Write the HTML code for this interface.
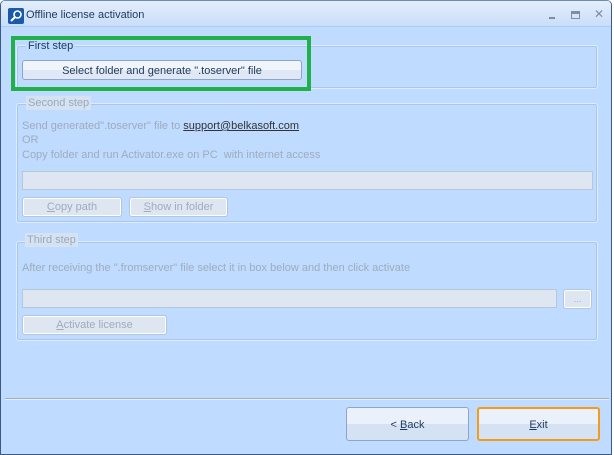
<!DOCTYPE html><html><head><style>
*{margin:0;padding:0;box-sizing:border-box}
body{width:614px;height:455px;background:#fff;font-family:"Liberation Sans",sans-serif;font-size:11px;position:relative;overflow:hidden}
.a{position:absolute}
.win{left:0;top:0;width:612px;height:455px;background:#bfdbff;border:1px solid #3b5a82;border-top-color:#6d8cb4;border-radius:5px 5px 0 0}
.title{left:1px;top:1px;width:610px;height:26px;background:linear-gradient(#e4eefb,#c9defa);border-bottom:1px solid #aecbf0;border-radius:4px 4px 0 0}
.grp{border:1px solid #e0ecfc;border-radius:3px;box-shadow:inset 0 0 0 1px #a9c6ec}
.lg{background:#d5e2f2;color:#9aa8bb;padding:0 2px;height:14px;line-height:14px}
.dis{color:#a0acbc}
.btn{border:1px solid #fff;outline:1px solid #b2c6e0;border-radius:2px;background:#dde6f1;color:#a0acbc;text-align:center;line-height:16px}
.inp{background:#dde6f1;border:1px solid #b8c7d8}
.bb{border:1px solid #8da5c8;border-radius:3px;background:linear-gradient(#eaf1fb 50%,#d4e2f3 50%);color:#1e395b;text-align:center;line-height:34px}
u{text-decoration:underline}
</style></head><body>
<div class="a win"></div>
<div class="a title"></div>
<div class="a" style="left:8px;top:8px;width:16px;height:16px;background:#1a5aa8;border-radius:2px"><svg width="16" height="16"><circle cx="9.5" cy="6.5" r="3.5" fill="none" stroke="#fff" stroke-width="1.6"/><path d="M7 9L3 13" stroke="#fff" stroke-width="2"/></svg></div>
<div class="a" style="left:26px;top:9px;color:#1e395b;font-size:11px">Offline license activation</div>
<div class="a" style="left:549px;top:17px;width:6px;height:2px;background:#7c8ea6"></div>
<div class="a" style="left:571px;top:11px;width:9px;height:8px;border:1px solid #7c8ea6;border-top-width:3px"></div>
<div class="a" style="left:594px;top:7px;color:#7c8ea6;font-size:12px">✕</div>

<div class="a grp" style="left:16px;top:45px;width:582px;height:44px"></div>
<div class="a" style="left:26px;top:40px;background:#bfdbff;padding:0 2px;color:#1e395b">First step</div>
<div class="a" style="left:22px;top:60px;width:280px;height:20px;border:1px solid #8da5c8;border-radius:3px;background:linear-gradient(#f0f5fc 50%,#dfe8f4 50%);color:#1e395b;text-align:center;line-height:20px">Select folder and <u>g</u>enerate ".toserver" file</div>
<div class="a" style="left:11px;top:36px;width:300px;height:55px;border:4px solid #22b04c"></div>

<div class="a grp" style="left:16px;top:103px;width:582px;height:120px"></div>
<div class="a lg" style="left:26px;top:96px">Second step</div>
<div class="a dis" style="left:22px;top:120px">Send generated".toserver" file to <u style="color:#333">support@belkasoft.com</u></div>
<div class="a dis" style="left:22px;top:134px">OR</div>
<div class="a dis" style="left:22px;top:149px">Copy folder and run Activator.exe on PC &nbsp;with internet access</div>
<div class="a inp" style="left:22px;top:171px;width:571px;height:19px"></div>
<div class="a btn" style="left:23px;top:198px;width:98px;height:18px"><u>C</u>opy path</div>
<div class="a btn" style="left:130px;top:198px;width:97px;height:18px"><u>S</u>how in folder</div>

<div class="a grp" style="left:16px;top:241px;width:582px;height:100px"></div>
<div class="a lg" style="left:25px;top:233px">Third step</div>
<div class="a dis" style="left:22px;top:262px">After receiving the ".fromserver" file select it in box below and then click activate</div>
<div class="a inp" style="left:22px;top:289px;width:535px;height:19px"></div>
<div class="a btn" style="left:564px;top:290px;width:27px;height:18px;font-size:9px">...</div>
<div class="a btn" style="left:23px;top:316px;width:143px;height:18px"><u>A</u>ctivate license</div>

<div class="a" style="left:5px;top:398px;width:604px;height:2px;background:#9fb0c6;border-bottom:1px solid #e6eefa"></div>
<div class="a bb" style="left:346px;top:407px;width:123px;height:34px">&lt; <u>B</u>ack</div>
<div class="a bb" style="left:477px;top:407px;width:123px;height:34px;border:2px solid #f29b1d;line-height:32px"><u>E</u>xit</div>
</body></html>
